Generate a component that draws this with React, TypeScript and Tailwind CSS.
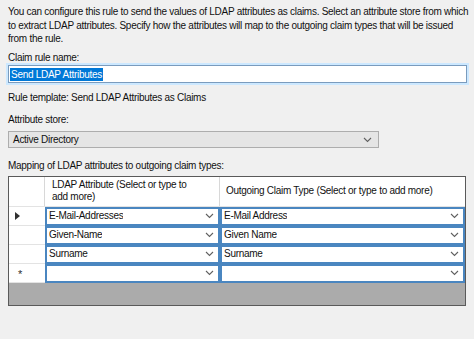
import React from "react";

function Chevron() {
  return (
    <svg width="9" height="6" viewBox="0 0 9 6" className="shrink-0">
      <polyline points="1,1 4.5,4.5 8,1" fill="none" stroke="#606060" strokeWidth="1.1" />
    </svg>
  );
}

type RowProps = {
  marker?: "arrow" | "star";
  attr: string;
  claim: string;
};

function ComboCell({ value, wide }: { value: string; wide?: boolean }) {
  return (
    <div
      className={`flex items-center justify-between h-[19px] border-2 border-[#4a86c0] bg-white pl-[2px] pr-[4px] ${
        wide ? "flex-1" : "w-[175px]"
      }`}
    >
      <span className="truncate">{value}</span>
      <Chevron />
    </div>
  );
}

function MappingRow({ marker, attr, claim }: RowProps) {
  return (
    <div className="flex h-[19px]">
      <div className="w-[36px] shrink-0 bg-white border-b border-[#e3e3e3] flex items-center pl-[6px]">
        {marker === "arrow" && (
          <svg width="6" height="8" viewBox="0 0 6 8">
            <polygon points="0,0 5,4 0,8" fill="#303030" />
          </svg>
        )}
        {marker === "star" && <span className="text-[11px] leading-none pt-[3px] pl-[3px] text-[#303030]">*</span>}
      </div>
      <ComboCell value={attr} />
      <ComboCell value={claim} wide />
    </div>
  );
}

export default function App() {
  return (
    <div className="w-[474px] h-[339px] bg-[#f0f0f0] px-2 pt-[5px] text-[10px] leading-[13.5px] tracking-[-0.28px] text-[#111] font-['Liberation_Sans',Arial,sans-serif] overflow-hidden">
      <p className="whitespace-nowrap">
        You can configure this rule to send the values of LDAP attributes as claims. Select an attribute store from which
        <br />
        to extract LDAP attributes. Specify how the attributes will map to the outgoing claim types that will be issued
        <br />
        from the rule.
      </p>

      <div className="mt-[5px]">Claim rule name:</div>
      <div className="mt-[1px] h-[18px] w-[459px] border border-[#7a9bbd] bg-white ring-2 ring-[#cce8ff] flex items-center pl-px">
        <span className="bg-[#0078d7] text-white px-px leading-[13px]">Send LDAP Attributes</span>
      </div>

      <div className="mt-[8px]">Rule template: Send LDAP Attributes as Claims</div>

      <div className="mt-[8px]">Attribute store:</div>
      <div className="mt-[5px] h-[17px] w-[371px] border border-[#adadad] bg-[#e5e5e5] flex items-center justify-between pl-[4px] pr-[6px]">
        <span>Active Directory</span>
        <Chevron />
      </div>

      <div className="mt-[11px]">Mapping of LDAP attributes to outgoing claim types:</div>

      <div className="mt-[3px] w-[458px] h-[130px] border border-[#5a5a5a] bg-[#ababab] flex flex-col">
        <div className="flex h-[30px] bg-white border-b border-[#e3e3e3]">
          <div className="w-[36px] shrink-0 border-r border-[#d8d8d8]" />
          <div className="w-[175px] border-r border-[#d8d8d8] pl-[7px] flex items-center leading-[12px]">
            LDAP Attribute (Select or type to
            <br />
            add more)
          </div>
          <div className="flex-1 pl-[6px] flex items-center">Outgoing Claim Type (Select or type to add more)</div>
        </div>
        <MappingRow marker="arrow" attr="E-Mail-Addresses" claim="E-Mail Address" />
        <MappingRow attr="Given-Name" claim="Given Name" />
        <MappingRow attr="Surname" claim="Surname" />
        <MappingRow marker="star" attr="" claim="" />
      </div>
    </div>
  );
}
